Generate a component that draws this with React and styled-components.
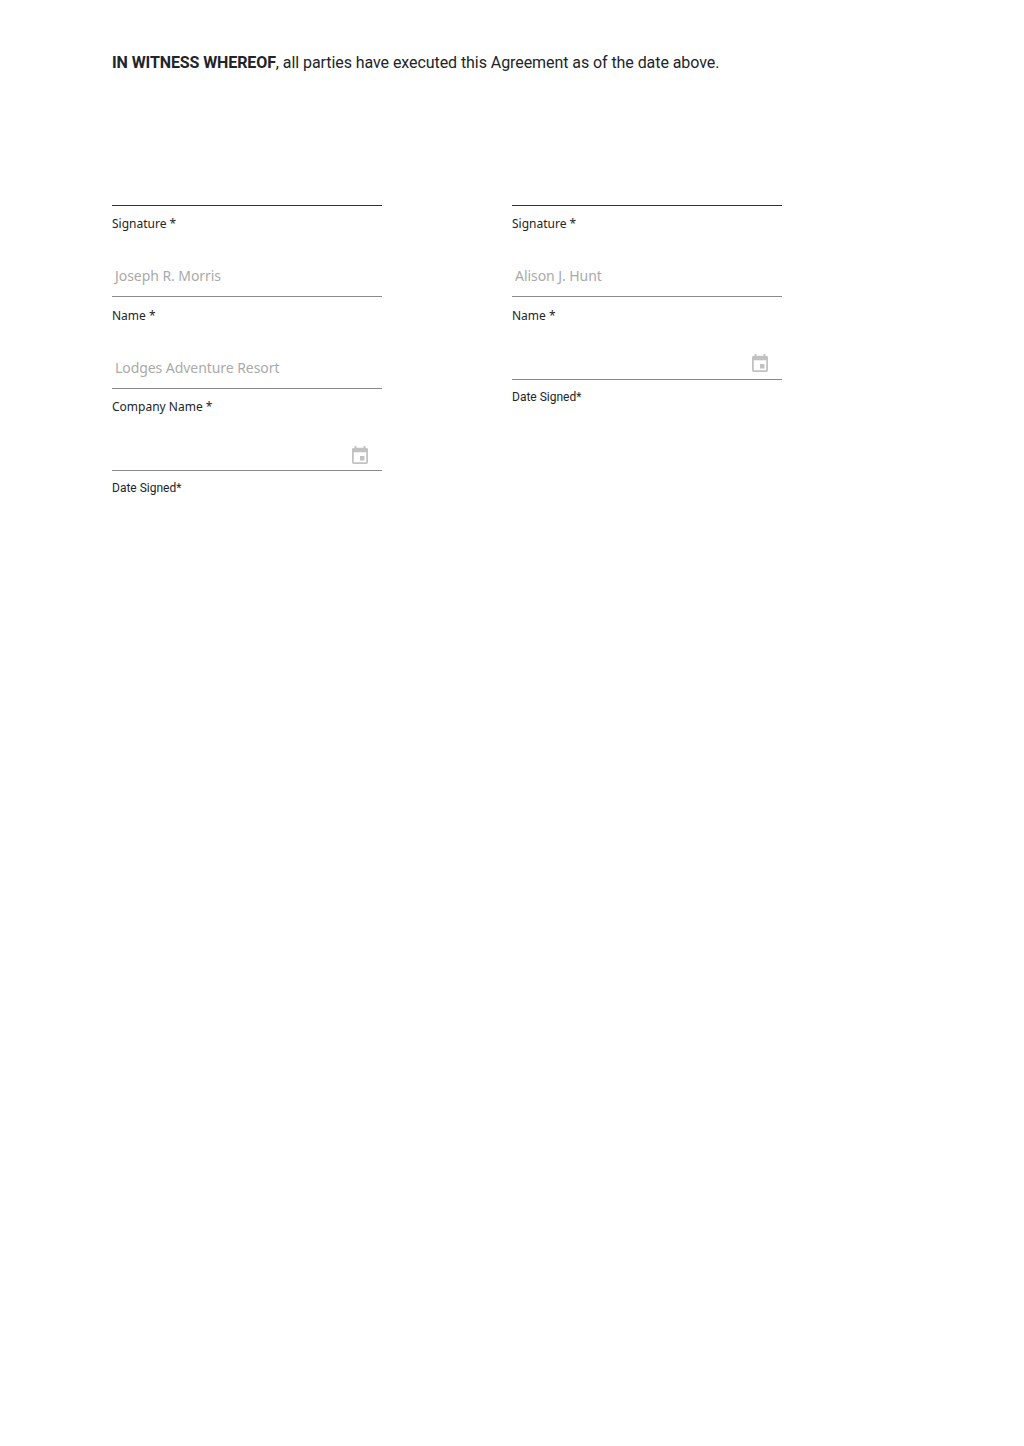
import React from "react";
import styled, { createGlobalStyle } from "styled-components";

const Global = createGlobalStyle`
  html, body { margin: 0; padding: 0; background: #fff; }
`;

const Page = styled.div`
  box-sizing: border-box;
  width: 1024px;
  height: 1446px;
  padding: 53px 112px 0;
`;

const Intro = styled.p`
  margin: 0;
  font: 400 16px/20px Roboto, sans-serif;
  letter-spacing: -0.07px;
  color: #212529;
  strong { font-weight: 700; letter-spacing: -0.1px; }
`;

const Columns = styled.div`
  display: flex;
  gap: 130px;
  margin-top: 131.6px;
`;

const Column = styled.div`
  width: 270px;
  display: flex;
  flex-direction: column;
`;

const Line = styled.div`
  border-bottom: 1px solid ${p => (p.$dark ? "#333" : "#8a8a8a")};
`;

const Value = styled(Line)`
  height: 32px;
  margin-top: 31.15px;
  padding-left: 3px;
  font: 400 14px/23px "Noto Sans", sans-serif;
  letter-spacing: -0.06px;
  color: #aaa;
`;

const DateLine = styled(Line)`
  box-sizing: border-box;
  height: 33px;
  margin-top: 22.15px;
  padding: 7.9px 14px 0 0;
  display: flex;
  justify-content: flex-end;
  align-items: flex-start;
  color: #c2c2c2;
`;

const Label = styled.div`
  margin-top: 10.85px;
  font: 400 12px/16.5px "Noto Sans", sans-serif;
  color: #212529;
`;

const DateLabel = styled.div`
  margin-top: 9px;
  font: 400 12px/16px Roboto, sans-serif;
  color: #212529;
`;

const CalendarIcon = () => (
  <svg width="16" height="18" viewBox="3 1 18 20" preserveAspectRatio="none" fill="currentColor">
    <path d="M17 12h-5v5h5v-5zM16 1v2H8V1H6v2H5a2 2 0 0 0-2 2v14a2 2 0 0 0 2 2h14a2 2 0 0 0 2-2V5a2 2 0 0 0-2-2h-1V1h-2zm3 18H5V8h14v11z" />
  </svg>
);

const Signer = ({ name, company }) => (
  <Column>
    <Line $dark />
    <Label>Signature *</Label>
    <Value>{name}</Value>
    <Label>Name *</Label>
    {company && (
      <>
        <Value>{company}</Value>
        <Label>Company Name *</Label>
      </>
    )}
    <DateLine>
      <CalendarIcon />
    </DateLine>
    <DateLabel>Date Signed*</DateLabel>
  </Column>
);

export default function App() {
  return (
    <Page>
      <Global />
      <Intro>
        <strong>IN WITNESS WHEREOF</strong>, all parties have executed this Agreement as of the date above.
      </Intro>
      <Columns>
        <Signer name="Joseph R. Morris" company="Lodges Adventure Resort" />
        <Signer name="Alison J. Hunt" />
      </Columns>
    </Page>
  );
}
